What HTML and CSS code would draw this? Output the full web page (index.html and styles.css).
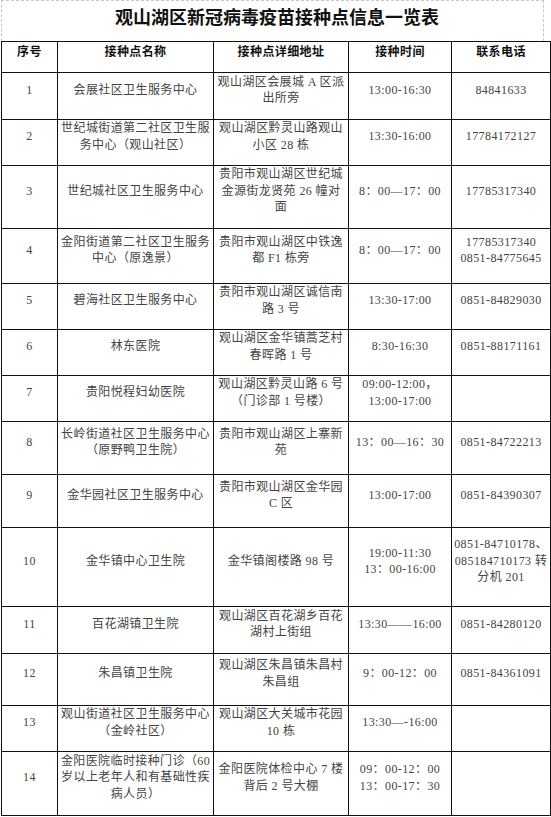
FILE: index.html
```html
<!DOCTYPE html>
<html lang="zh-CN">
<head>
<meta charset="utf-8">
<title>观山湖区新冠病毒疫苗接种点信息一览表</title>
<link rel="stylesheet" href="styles.css">
</head>
<body>
<div class="title-box"><h1 class="title">观山湖区新冠病毒疫苗接种点信息一览表</h1></div>
<table class="sites">
<colgroup>
<col class="c-no"><col class="c-name"><col class="c-addr"><col class="c-time"><col class="c-tel">
</colgroup>
<thead>
<tr class="h31"><th>序号</th><th>接种点名称</th><th>接种点详细地址</th><th>接种时间</th><th>联系电话</th></tr>
</thead>
<tbody>
<tr class="h47"><td>1</td><td>会展社区卫生服务中心</td><td>观山湖区会展城 A 区派<br>出所旁</td><td>13:00-16:30</td><td>84841633</td></tr>
<tr class="h46"><td>2</td><td>世纪城街道第二社区卫生服<br>务中心（观山社区）</td><td>观山湖区黔灵山路观山<br>小区 28 栋</td><td>13:30-16:00</td><td>17784172127</td></tr>
<tr class="h63"><td>3</td><td>世纪城社区卫生服务中心</td><td>贵阳市观山湖区世纪城<br>金源街龙贤苑 26 幢对<br>面</td><td>8：00—17：00</td><td>17785317340</td></tr>
<tr class="h55"><td>4</td><td>金阳街道第二社区卫生服务<br>中心（原逸景）</td><td>贵阳市观山湖区中铁逸<br>都 F1 栋旁</td><td>8：00—17：00</td><td>17785317340<br>0851-84775645</td></tr>
<tr class="h46"><td>5</td><td>碧海社区卫生服务中心</td><td>贵阳市观山湖区诚信南<br>路 3 号</td><td>13:30-17:00</td><td>0851-84829030</td></tr>
<tr class="h46"><td>6</td><td>林东医院</td><td>观山湖区金华镇蒿芝村<br>春晖路 1 号</td><td>8:30-16:30</td><td>0851-88171161</td></tr>
<tr class="h46"><td>7</td><td>贵阳悦程妇幼医院</td><td>观山湖区黔灵山路 6 号<br>（门诊部 1 号楼）</td><td>09:00-12:00，<br>13:00-17:00</td><td></td></tr>
<tr class="h53"><td>8</td><td>长岭街道社区卫生服务中心<br>（原野鸭卫生院）</td><td>贵阳市观山湖区上寨新<br>苑</td><td>13：00—16：30</td><td>0851-84722213</td></tr>
<tr class="h53"><td>9</td><td>金华园社区卫生服务中心</td><td>贵阳市观山湖区金华园<br>C 区</td><td>13:00-17:00</td><td>0851-84390307</td></tr>
<tr class="h79"><td>10</td><td>金华镇中心卫生院</td><td>金华镇阁楼路 98 号</td><td>19:00-11:30<br>13：00-16:00</td><td>0851-84710178、<br>085184710173 转<br>分机 201</td></tr>
<tr class="h47"><td>11</td><td>百花湖镇卫生院</td><td>观山湖区百花湖乡百花<br>湖村上街组</td><td>13:30——16:00</td><td>0851-84280120</td></tr>
<tr class="h52"><td>12</td><td>朱昌镇卫生院</td><td>观山湖区朱昌镇朱昌村<br>朱昌组</td><td>9：00-12：00</td><td>0851-84361091</td></tr>
<tr class="h46"><td>13</td><td>观山街道社区卫生服务中心<br>（金岭社区）</td><td>观山湖区大关城市花园<br>10 栋</td><td>13:30—-16:00</td><td></td></tr>
<tr class="h64"><td>14</td><td>金阳医院临时接种门诊（60<br>岁以上老年人和有基础性疾<br>病人员）</td><td>金阳医院体检中心 7 楼<br>背后 2 号大棚</td><td>09：00-12：00<br>13：00-17：30</td><td></td></tr>
</tbody>
</table>
</body>
</html>
```
FILE: styles.css
```css
html, body {
  margin: 0;
  padding: 0;
  background: #fff;
}
body {
  font-family: "Liberation Serif", "Noto Sans CJK SC", serif;
  color: #333;
}
.title-box {
  box-sizing: border-box;
  width: 543px;
  height: 41px;
  margin-left: 1px;
  border: 1px dashed #c8c8c8;
  border-bottom: none;
  display: flex;
  justify-content: center;
  padding: 3px 0 0 9px;
}
.title {
  margin: 0;
  font-family: "Noto Sans CJK SC", serif;
  font-size: 18px;
  font-weight: 700;
  line-height: 24px;
  color: #111;
  letter-spacing: 0;
}
.sites {
  table-layout: fixed;
  border-collapse: collapse;
  width: 550px;
  margin-left: 1px;
}
.c-no { width: 56px; }
.c-name { width: 156px; }
.c-addr { width: 135px; }
.c-time { width: 103px; }
.c-tel { width: 99px; }
.sites th,
.sites td {
  border: 1px solid #111;
  padding: 0 2px 12px;
  text-align: center;
  vertical-align: middle;
  font-size: 12px;
  line-height: 16.5px;
  letter-spacing: 0.4px;
  white-space: nowrap;
}
.sites th {
  font-family: "Noto Sans CJK SC", serif;
  font-weight: 700;
  color: #111;
}
.sites td {
  font-weight: 400;
  color: #444;
}
.h31 { height: 31px; }
.h46 { height: 46px; }
.h47 { height: 47px; }
.h52 { height: 52px; }
.h53 { height: 53px; }
.h55 { height: 55px; }
.h63 { height: 63px; }
.h64 { height: 64px; }
.h79 { height: 79px; }
```
